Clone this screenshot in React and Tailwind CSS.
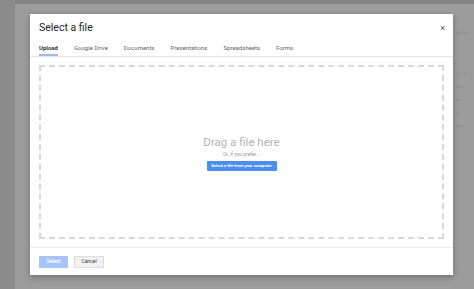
import React from 'react';

const tabs = ['Upload', 'Google Drive', 'Documents', 'Presentations', 'Spreadsheets', 'Forms'];

const App = () => {
  return (
    <div
      className="relative w-[474px] h-[289px] overflow-hidden bg-[#9c9c9c] flex"
      style={{ fontFamily: 'Roboto, "Liberation Sans", sans-serif' }}
    >
      {/* page behind the overlay */}
      <div className="w-[15px] h-full bg-[#8b8b8b]" />
      <div className="flex-1 flex flex-col">
        <div className="h-[4px] bg-[#858585]" />
        <div className="flex-1 flex justify-end pr-[2px] pt-[26px]">
          <div className="flex flex-col gap-[7px] text-[4px] text-[#8a8a8a] w-[16px] whitespace-nowrap">
            <span>Select</span>
            <span className="mt-[28px]">th List</span>
            <span>table</span>
            <span>nce</span>
            <span>ud</span>
            <span>table</span>
          </div>
        </div>
      </div>

      {/* modal */}
      <div className="absolute left-[30px] top-[14px] w-[423px] h-[261px] bg-white shadow-[0_2px_6px_rgba(0,0,0,0.3)] flex flex-col">
        <div className="flex items-center justify-between pl-[9px] pr-[8px] h-[26px] pt-[2px]">
          <span className="text-[10.5px] text-[#222]">Select a file</span>
          <span className="text-[9px] leading-none text-[#555]">×</span>
        </div>
        <div className="flex pl-[9px] gap-[16px] h-[17px] border-b border-[#e5e5e5]">
          {tabs.map((t, i) => (
            <div
              key={t}
              className={`flex items-center text-[6px] ${
                i === 0 ? 'font-bold text-[#333] border-b-2 border-[#a8b4ee]' : 'text-[#666] border-b-2 border-transparent'
              }`}
            >
              {t}
            </div>
          ))}
        </div>
        <div className="flex-1 px-[9px] pt-[8px] pb-[8px] flex">
          <div className="flex-1 border-2 border-dashed border-[#d8d8d8] flex flex-col items-center justify-center">
            <span className="text-[11.5px] text-[#b4b4b4] mt-[2px] leading-[14px]">Drag a file here</span>
            <span className="text-[5px] text-[#9a9a9a] mt-[2px]">Or, if you prefer...</span>
            <button className="mt-[2px] bg-[#4d8cf0] text-white text-[4.2px] font-bold h-[10px] w-[70px] rounded-[1px] whitespace-nowrap">
              Select a file from your computer
            </button>
          </div>
        </div>
        <div className="border-t border-[#ebebeb] h-[28px] flex items-center gap-[6px] pl-[9px]">
          <button className="w-[29px] h-[12px] bg-[#a7c4f6] text-white text-[5px] font-bold rounded-[1px]">
            Select
          </button>
          <button className="w-[30px] h-[12px] bg-[#f3f3f3] border border-[#dcdcdc] text-[#333] text-[5px] rounded-[1px]">
            Cancel
          </button>
        </div>
      </div>
    </div>
  );
};

export default App;
